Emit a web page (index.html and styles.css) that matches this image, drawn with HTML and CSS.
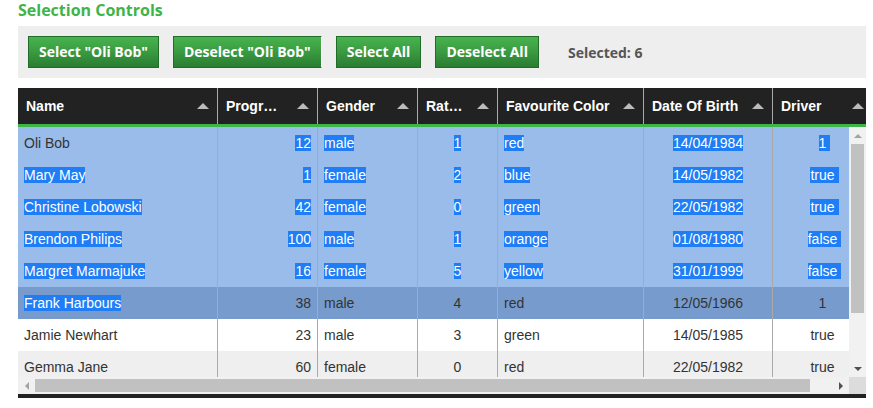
FILE: index.html
```html
<!DOCTYPE html>
<html>
<head>
<meta charset="utf-8">
<link rel="stylesheet" href="styles.css">
</head>
<body>
<div class="page">
  <h2 class="title">Selection Controls</h2>
  <div class="controls">
    <button class="btn">Select "Oli Bob"</button>
    <button class="btn btn-focus">Deselect "Oli Bob"</button>
    <button class="btn">Select All</button>
    <button class="btn">Deselect All</button>
    <span class="count">Selected: 6</span>
  </div>
  <div class="table">
    <div class="thead">
      <div class="hrow">
        <div class="th w-name"><span class="th-title">Name</span><span class="sort"></span></div>
        <div class="th w-prog"><span class="th-title">Progress</span><span class="sort"></span></div>
        <div class="th w-gender"><span class="th-title">Gender</span><span class="sort"></span></div>
        <div class="th w-rating"><span class="th-title">Rating</span><span class="sort"></span></div>
        <div class="th w-color"><span class="th-title">Favourite Color</span><span class="sort"></span></div>
        <div class="th w-dob"><span class="th-title">Date Of Birth</span><span class="sort"></span></div>
        <div class="th w-driver"><span class="th-title">Driver</span><span class="sort"></span></div>
      </div>
    </div>
    <div class="tbody">
      <div class="viewport">
        <div class="row sel">
          <div class="td w-name left">Oli Bob</div>
          <div class="td w-prog right"><span class="hl">12</span></div>
          <div class="td w-gender left"><span class="hl">male</span></div>
          <div class="td w-rating center"><span class="hl">1</span></div>
          <div class="td w-color left"><span class="hl">red</span></div>
          <div class="td w-dob center"><span class="hl">14/04/1984</span></div>
          <div class="td w-driver center"><span class="hl trail">1</span></div>
        </div>
        <div class="row sel">
          <div class="td w-name left"><span class="hl">Mary May</span></div>
          <div class="td w-prog right"><span class="hl">1</span></div>
          <div class="td w-gender left"><span class="hl">female</span></div>
          <div class="td w-rating center"><span class="hl">2</span></div>
          <div class="td w-color left"><span class="hl">blue</span></div>
          <div class="td w-dob center"><span class="hl">14/05/1982</span></div>
          <div class="td w-driver center"><span class="hl trail">true</span></div>
        </div>
        <div class="row sel">
          <div class="td w-name left"><span class="hl">Christine Lobowski</span></div>
          <div class="td w-prog right"><span class="hl">42</span></div>
          <div class="td w-gender left"><span class="hl">female</span></div>
          <div class="td w-rating center"><span class="hl">0</span></div>
          <div class="td w-color left"><span class="hl">green</span></div>
          <div class="td w-dob center"><span class="hl">22/05/1982</span></div>
          <div class="td w-driver center"><span class="hl trail">true</span></div>
        </div>
        <div class="row sel">
          <div class="td w-name left"><span class="hl">Brendon Philips</span></div>
          <div class="td w-prog right"><span class="hl">100</span></div>
          <div class="td w-gender left"><span class="hl">male</span></div>
          <div class="td w-rating center"><span class="hl">1</span></div>
          <div class="td w-color left"><span class="hl">orange</span></div>
          <div class="td w-dob center"><span class="hl">01/08/1980</span></div>
          <div class="td w-driver center"><span class="hl trail">false</span></div>
        </div>
        <div class="row sel">
          <div class="td w-name left"><span class="hl">Margret Marmajuke</span></div>
          <div class="td w-prog right"><span class="hl">16</span></div>
          <div class="td w-gender left"><span class="hl">female</span></div>
          <div class="td w-rating center"><span class="hl">5</span></div>
          <div class="td w-color left"><span class="hl">yellow</span></div>
          <div class="td w-dob center"><span class="hl">31/01/1999</span></div>
          <div class="td w-driver center"><span class="hl trail">false</span></div>
        </div>
        <div class="row sel-hover">
          <div class="td w-name left"><span class="hl">Frank Harbours</span></div>
          <div class="td w-prog right">38</div>
          <div class="td w-gender left">male</div>
          <div class="td w-rating center">4</div>
          <div class="td w-color left">red</div>
          <div class="td w-dob center">12/05/1966</div>
          <div class="td w-driver center">1</div>
        </div>
        <div class="row even">
          <div class="td w-name left">Jamie Newhart</div>
          <div class="td w-prog right">23</div>
          <div class="td w-gender left">male</div>
          <div class="td w-rating center">3</div>
          <div class="td w-color left">green</div>
          <div class="td w-dob center">14/05/1985</div>
          <div class="td w-driver center">true</div>
        </div>
        <div class="row odd">
          <div class="td w-name left">Gemma Jane</div>
          <div class="td w-prog right">60</div>
          <div class="td w-gender left">female</div>
          <div class="td w-rating center">0</div>
          <div class="td w-color left">red</div>
          <div class="td w-dob center">22/05/1982</div>
          <div class="td w-driver center">true</div>
        </div>
      </div>
      <div class="vscroll">
        <div class="sb-btn"><span class="arr-up"></span></div>
        <div class="vthumb"></div>
        <div class="sb-fill"></div>
        <div class="sb-btn"><span class="arr-down"></span></div>
      </div>
      <div class="hscroll">
        <div class="sb-btn"><span class="arr-left"></span></div>
        <div class="hthumb"></div>
        <div class="sb-fill"></div>
        <div class="sb-btn"><span class="arr-right"></span></div>
      </div>
      <div class="corner"></div>
    </div>
    <div class="footer"></div>
  </div>
</div>
</body>
</html>
```
FILE: styles.css
```css
html, body {
  margin: 0;
  padding: 0;
  background: #fff;
}

.page {
  width: 848px;
  padding-left: 18px;
}

.title {
  margin: 0 0 6px 0;
  font-family: "Open Sans", sans-serif;
  font-weight: 700;
  font-size: 16px;
  line-height: 20px;
  color: #3fb449;
}

.controls {
  display: flex;
  align-items: center;
  gap: 14px;
  background: #eeeeee;
  padding: 10px;
  height: 32px;
}

.btn {
  box-sizing: border-box;
  height: 32px;
  padding: 0 10px;
  margin: 0;
  border: 1px solid #216c28;
  background: linear-gradient(to bottom, #48b34f 0%, #3a9a41 50%, #2a7c31 100%);
  color: #fff;
  font-family: "Open Sans", sans-serif;
  font-weight: 700;
  font-size: 14px;
  line-height: 30px;
  white-space: nowrap;
  cursor: pointer;
}

.btn-focus {
  border-right-color: #ffffff;
}

.count {
  margin-left: 15px;
  font-family: "Open Sans", sans-serif;
  font-weight: 700;
  font-size: 14px;
  color: #555;
}

.table {
  margin-top: 10px;
  width: 848px;
}

.thead {
  width: 848px;
  overflow: hidden;
  background: #222;
  border-bottom: 3px solid #3fb449;
}

.hrow {
  display: flex;
  width: 855px;
  height: 36px;
}

.th {
  flex: none;
  box-sizing: border-box;
  height: 36px;
  display: flex;
  align-items: center;
  padding: 0 8px;
  border-right: 1px solid #aaa;
  color: #fff;
  font-family: "Liberation Sans", Arial, sans-serif;
  font-weight: 700;
  font-size: 14px;
}

.th-title {
  flex: 1;
  min-width: 0;
  overflow: hidden;
  white-space: nowrap;
  text-overflow: ellipsis;
}

.sort {
  flex: none;
  width: 0;
  height: 0;
  margin-left: 12px;
  border-left: 6px solid transparent;
  border-right: 6px solid transparent;
  border-bottom: 6px solid #bbb;
}

.w-name { width: 200px; }
.w-prog { width: 100px; }
.w-gender { width: 100px; }
.w-rating { width: 80px; }
.w-color { width: 146px; }
.w-dob { width: 129px; }
.w-driver { width: 100px; }

.tbody {
  display: grid;
  grid-template-columns: 831px 17px;
  grid-template-rows: 250px 17px;
}

.viewport {
  overflow: hidden;
  background: #fff;
}

.row {
  display: flex;
  width: 855px;
  height: 32px;
}

.row.sel { background: #9abcea; }
.row.sel-hover { background: #769bcc; }
.row.even { background: #fff; }
.row.odd { background: #efefef; }

.td {
  flex: none;
  box-sizing: border-box;
  height: 32px;
  line-height: 32px;
  padding: 0 6px;
  border-right: 1px solid #aaa;
  overflow: hidden;
  white-space: nowrap;
  color: #333;
  font-family: "Liberation Sans", Arial, sans-serif;
  font-size: 14px;
}

.left { text-align: left; }
.right { text-align: right; }
.center { text-align: center; }

.hl {
  background: #1f7ef5;
  color: #fff;
}

.hl.trail {
  padding-right: 4px;
  margin-right: -4px;
}

.vscroll {
  display: flex;
  flex-direction: column;
  background: #f1f1f1;
}

.hscroll {
  display: flex;
  flex-direction: row;
  background: #f1f1f1;
}

.sb-btn {
  flex: none;
  width: 17px;
  height: 17px;
  display: flex;
  align-items: center;
  justify-content: center;
}

.sb-fill {
  flex: 1;
}

.vthumb {
  flex: none;
  height: 169px;
  margin: 0 2px;
  background: #c1c1c1;
}

.hthumb {
  flex: none;
  width: 775px;
  margin: 2px 0;
  background: #c1c1c1;
}

.arr-up, .arr-down, .arr-left, .arr-right {
  width: 0;
  height: 0;
}

.arr-up {
  border-left: 4px solid transparent;
  border-right: 4px solid transparent;
  border-bottom: 4px solid #a3a3a3;
}

.arr-down {
  border-left: 4px solid transparent;
  border-right: 4px solid transparent;
  border-top: 4px solid #505050;
}

.arr-left {
  border-top: 4px solid transparent;
  border-bottom: 4px solid transparent;
  border-right: 4px solid #a3a3a3;
}

.arr-right {
  border-top: 4px solid transparent;
  border-bottom: 4px solid transparent;
  border-left: 4px solid #505050;
}

.corner {
  background: #dcdcdc;
}

.footer {
  height: 4px;
  background: #222;
}
```
